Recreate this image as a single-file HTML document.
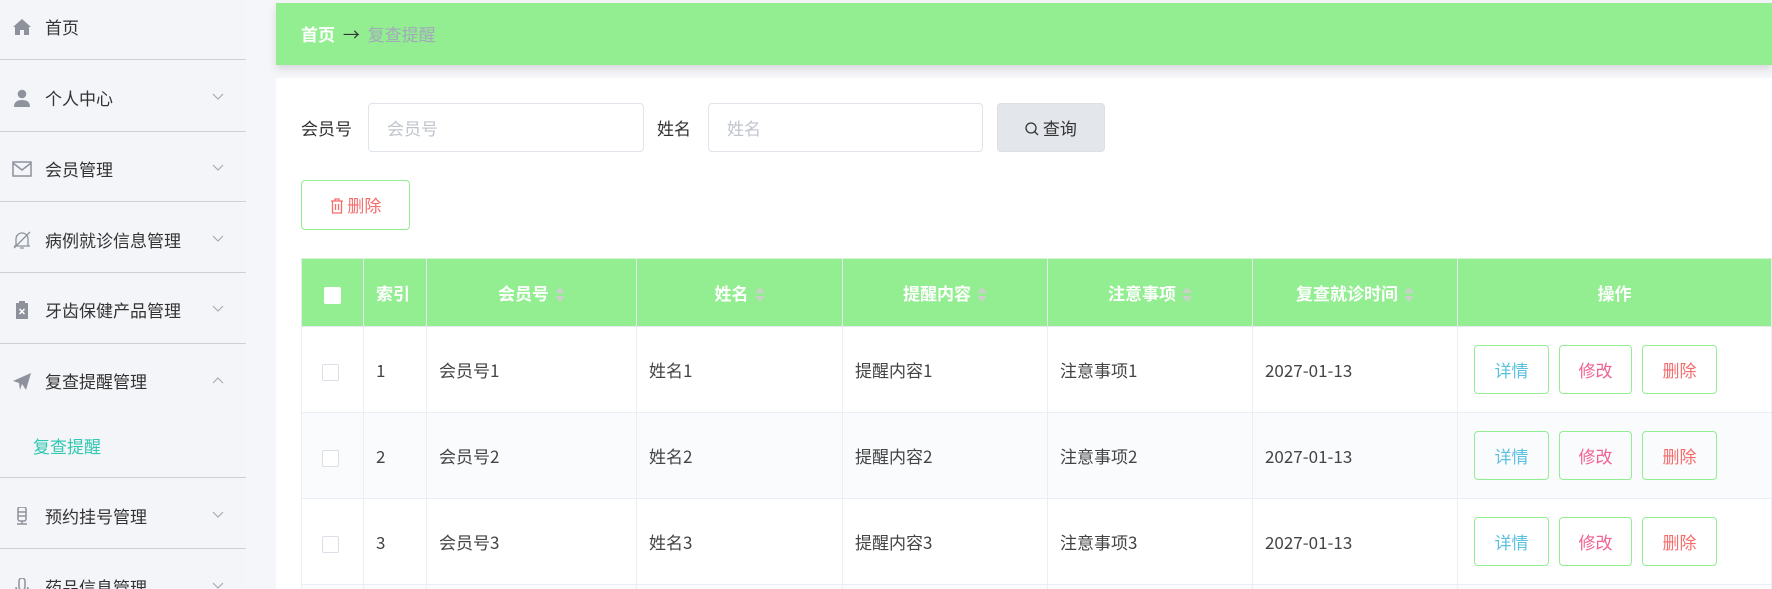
<!DOCTYPE html>
<html style="width:1772px;height:589px;overflow:hidden"><head><meta charset="utf-8"><style>
*{margin:0;padding:0;box-sizing:border-box}
body{width:1772px;height:589px;overflow:hidden;background:#f5f6f9;font-family:"Noto Sans CJK SC","Liberation Sans",sans-serif;color:#333;position:relative}
.side{position:absolute;left:0;top:0;width:246px;height:589px;background:#f4f5f9}
.it{position:absolute;left:0;width:246px;height:24px;font-size:17px;color:#333;line-height:24px}
.it .ic{position:absolute;left:12px;top:3px;width:20px;height:18px}
.it span{position:absolute;left:45px}
.it .ch{position:absolute;left:212px;top:7px}
.dv{position:absolute;left:0;width:246px;height:1px;background:#cfd0d6}
.hdr{position:absolute;left:276px;top:3px;width:1496px;height:62px;background:#92ee90;box-shadow:0 4px 8px rgba(0,0,0,.12)}
.bc{position:absolute;left:25px;top:19px;font-size:17px;line-height:24px}
.main{position:absolute;left:276px;top:78px;width:1496px;height:511px;background:#fff;overflow:hidden}
.lbl{position:absolute;font-size:17px;color:#333;line-height:24px}
.inp{position:absolute;height:49px;border:1px solid #dfe3ea;border-radius:4px;font-size:17px;color:#c0c4cc;line-height:47px;padding-left:18px}
.btn{position:absolute;border:1px solid #92ee90;border-radius:4px;background:#fff;font-size:17px;text-align:center;line-height:47px}
table{position:absolute;left:25px;top:180px;border-collapse:collapse;table-layout:fixed;width:1471px}
th{background:#92ee90;color:#fff;font-weight:bold;font-size:17px;height:68px;border:1px solid #e6e9ef;border-top:1px solid #d8f0d6;text-align:center}
td{height:86px;border:1px solid #ebeef5;font-size:17px;color:#444;padding-left:12px}
tr.alt td{background:#fafbfd}
.sort{display:inline-block;vertical-align:middle;margin-left:6px;width:10px;height:18px;position:relative}
.sort:before{content:"";position:absolute;left:0;top:1px;border:5px solid transparent;border-bottom:6px solid #c9d2c8;border-top:0}
.sort:after{content:"";position:absolute;left:0;top:10px;border:5px solid transparent;border-top:6px solid #c9d2c8;border-bottom:0}
.cb{display:inline-block;width:17px;height:17px;border:1px solid #dcdfe6;border-radius:2px;background:#fff;vertical-align:middle}
.ob{display:inline-block;width:75px;height:49px;border:1px solid #92ee90;border-radius:4px;text-align:center;line-height:47px;margin-right:10px;font-size:17px;vertical-align:middle}
</style></head><body>
<div class="side">
 <div class="it" style="top:15px"><svg class="ic" viewBox="0 0 20 18"><path d="M10 1L1 9h2v8h5v-5h4v5h5V9h2z" fill="#8e929c"/></svg><span>首页</span></div>
 <div class="dv" style="top:59px"></div>
 <div class="it" style="top:86px"><svg class="ic" viewBox="0 0 20 18"><circle cx="10" cy="5" r="4.3" fill="#8e929c"/><path d="M2 18c0-5 3-7 8-7s8 2 8 7z" fill="#8e929c"/></svg><span>个人中心</span><svg class="ch" width="12" height="8" viewBox="0 0 12 8"><path d="M1 1l5 5 5-5" stroke="#a0a4ae" fill="none"/></svg></div>
 <div class="dv" style="top:131px"></div>
 <div class="it" style="top:157px"><svg class="ic" viewBox="0 0 20 18"><rect x="1" y="2" width="18" height="14" fill="none" stroke="#8e929c" stroke-width="1.5"/><path d="M1 3l9 7 9-7" fill="none" stroke="#8e929c" stroke-width="1.5"/></svg><span>会员管理</span><svg class="ch" width="12" height="8" viewBox="0 0 12 8"><path d="M1 1l5 5 5-5" stroke="#a0a4ae" fill="none"/></svg></div>
 <div class="dv" style="top:201px"></div>
 <div class="it" style="top:228px"><svg class="ic" viewBox="0 0 20 18"><path d="M4 15V8a6 6 0 0 1 12 0v7h2H2zM8 17h4M2 17L18 1" fill="none" stroke="#8e929c" stroke-width="1.3"/></svg><span>病例就诊信息管理</span><svg class="ch" width="12" height="8" viewBox="0 0 12 8"><path d="M1 1l5 5 5-5" stroke="#a0a4ae" fill="none"/></svg></div>
 <div class="dv" style="top:272px"></div>
 <div class="it" style="top:298px"><svg class="ic" viewBox="0 0 20 18"><rect x="4" y="2" width="12" height="16" fill="#8e929c"/><rect x="7" y="0" width="6" height="3" fill="#8e929c"/><path d="M7.5 8l5 5M12.5 8l-5 5" stroke="#fff" stroke-width="1.5"/></svg><span>牙齿保健产品管理</span><svg class="ch" width="12" height="8" viewBox="0 0 12 8"><path d="M1 1l5 5 5-5" stroke="#a0a4ae" fill="none"/></svg></div>
 <div class="dv" style="top:343px"></div>
 <div class="it" style="top:369px"><svg class="ic" viewBox="0 0 20 18"><path d="M1 9L19 1l-5 17-4-6zM10 12l-2 6-1-7z" fill="#8e929c"/></svg><span>复查提醒管理</span><svg class="ch" width="12" height="8" viewBox="0 0 12 8"><path d="M1 7l5-5 5 5" stroke="#a0a4ae" fill="none"/></svg></div>
 <div class="it" style="top:434px"><span style="left:33px;color:#2fc8b0">复查提醒</span></div>
 <div class="dv" style="top:477px"></div>
 <div class="it" style="top:504px"><svg class="ic" viewBox="0 0 20 18"><rect x="6" y="0" width="8" height="14" rx="2" fill="none" stroke="#8e929c" stroke-width="1.5"/><path d="M6 5h8M6 9h8M10 14v3M5 17h10" stroke="#8e929c" stroke-width="1.5"/></svg><span>预约挂号管理</span><svg class="ch" width="12" height="8" viewBox="0 0 12 8"><path d="M1 1l5 5 5-5" stroke="#a0a4ae" fill="none"/></svg></div>
 <div class="dv" style="top:548px"></div>
 <div class="it" style="top:575px"><svg class="ic" viewBox="0 0 20 18"><rect x="7" y="0" width="6" height="12" rx="3" fill="none" stroke="#8e929c" stroke-width="1.5"/><path d="M4 9a6 6 0 0 0 12 0M10 15v3" fill="none" stroke="#8e929c" stroke-width="1.5"/></svg><span>药品信息管理</span><svg class="ch" width="12" height="8" viewBox="0 0 12 8"><path d="M1 1l5 5 5-5" stroke="#a0a4ae" fill="none"/></svg></div>
</div>
<div class="hdr"><div class="bc"><b style="color:#fff">首页</b> <span style="color:#333;margin:0 4px">→</span> <span style="color:#a3a9bb">复查提醒</span></div></div>
<div class="main">
<table>
<colgroup><col style="width:62px"><col style="width:63px"><col style="width:210px"><col style="width:206px"><col style="width:205px"><col style="width:205px"><col style="width:205px"><col></colgroup>
<tr><th><span class="cb" style="border-color:#fff"></span></th><th style="text-align:left;padding-left:12px">索引</th><th>会员号<i class="sort"></i></th><th>姓名<i class="sort"></i></th><th>提醒内容<i class="sort"></i></th><th>注意事项<i class="sort"></i></th><th>复查就诊时间<i class="sort"></i></th><th>操作</th></tr>
<tr><td style="padding-left:20px"><span class="cb"></span></td><td>1</td><td>会员号1</td><td>姓名1</td><td>提醒内容1</td><td>注意事项1</td><td>2027-01-13</td><td style="padding-left:16px"><span class="ob" style="color:#5bc0de">详情</span><span class="ob" style="color:#f06292;width:73px">修改</span><span class="ob" style="color:#f56c6c">删除</span></td></tr>
<tr class="alt"><td style="padding-left:20px"><span class="cb"></span></td><td>2</td><td>会员号2</td><td>姓名2</td><td>提醒内容2</td><td>注意事项2</td><td>2027-01-13</td><td style="padding-left:16px"><span class="ob" style="color:#5bc0de">详情</span><span class="ob" style="color:#f06292;width:73px">修改</span><span class="ob" style="color:#f56c6c">删除</span></td></tr>
<tr><td style="padding-left:20px"><span class="cb"></span></td><td>3</td><td>会员号3</td><td>姓名3</td><td>提醒内容3</td><td>注意事项3</td><td>2027-01-13</td><td style="padding-left:16px"><span class="ob" style="color:#5bc0de">详情</span><span class="ob" style="color:#f06292;width:73px">修改</span><span class="ob" style="color:#f56c6c">删除</span></td></tr>
<tr class="alt"><td style="height:30px"></td><td></td><td></td><td></td><td></td><td></td><td></td><td></td></tr>
</table>
</div>
<div class="lbl" style="left:301px;top:116px">会员号</div>
<div class="inp" style="left:368px;top:103px;width:276px">会员号</div>
<div class="lbl" style="left:657px;top:116px">姓名</div>
<div class="inp" style="left:708px;top:103px;width:275px">姓名</div>
<div class="btn" style="left:997px;top:103px;width:108px;height:49px;background:#e3e6ea;border-color:#dcdfe4;color:#333">
<svg width="14" height="14" viewBox="0 0 14 14" style="vertical-align:-1px"><circle cx="6" cy="6" r="5" fill="none" stroke="#333" stroke-width="1.3"/><path d="M9.5 9.5L13 13" stroke="#333" stroke-width="1.3"/></svg> 查询</div>
<div class="btn" style="left:301px;top:180px;width:109px;height:50px;color:#f56c6c">
<svg width="14" height="16" viewBox="0 0 14 16" style="vertical-align:-2px"><path d="M1 3h12M5 3V1h4v2M2.5 3v12h9V3M5.5 6v6M8.5 6v6" fill="none" stroke="#f56c6c" stroke-width="1.3"/></svg> 删除</div>
</body></html>
